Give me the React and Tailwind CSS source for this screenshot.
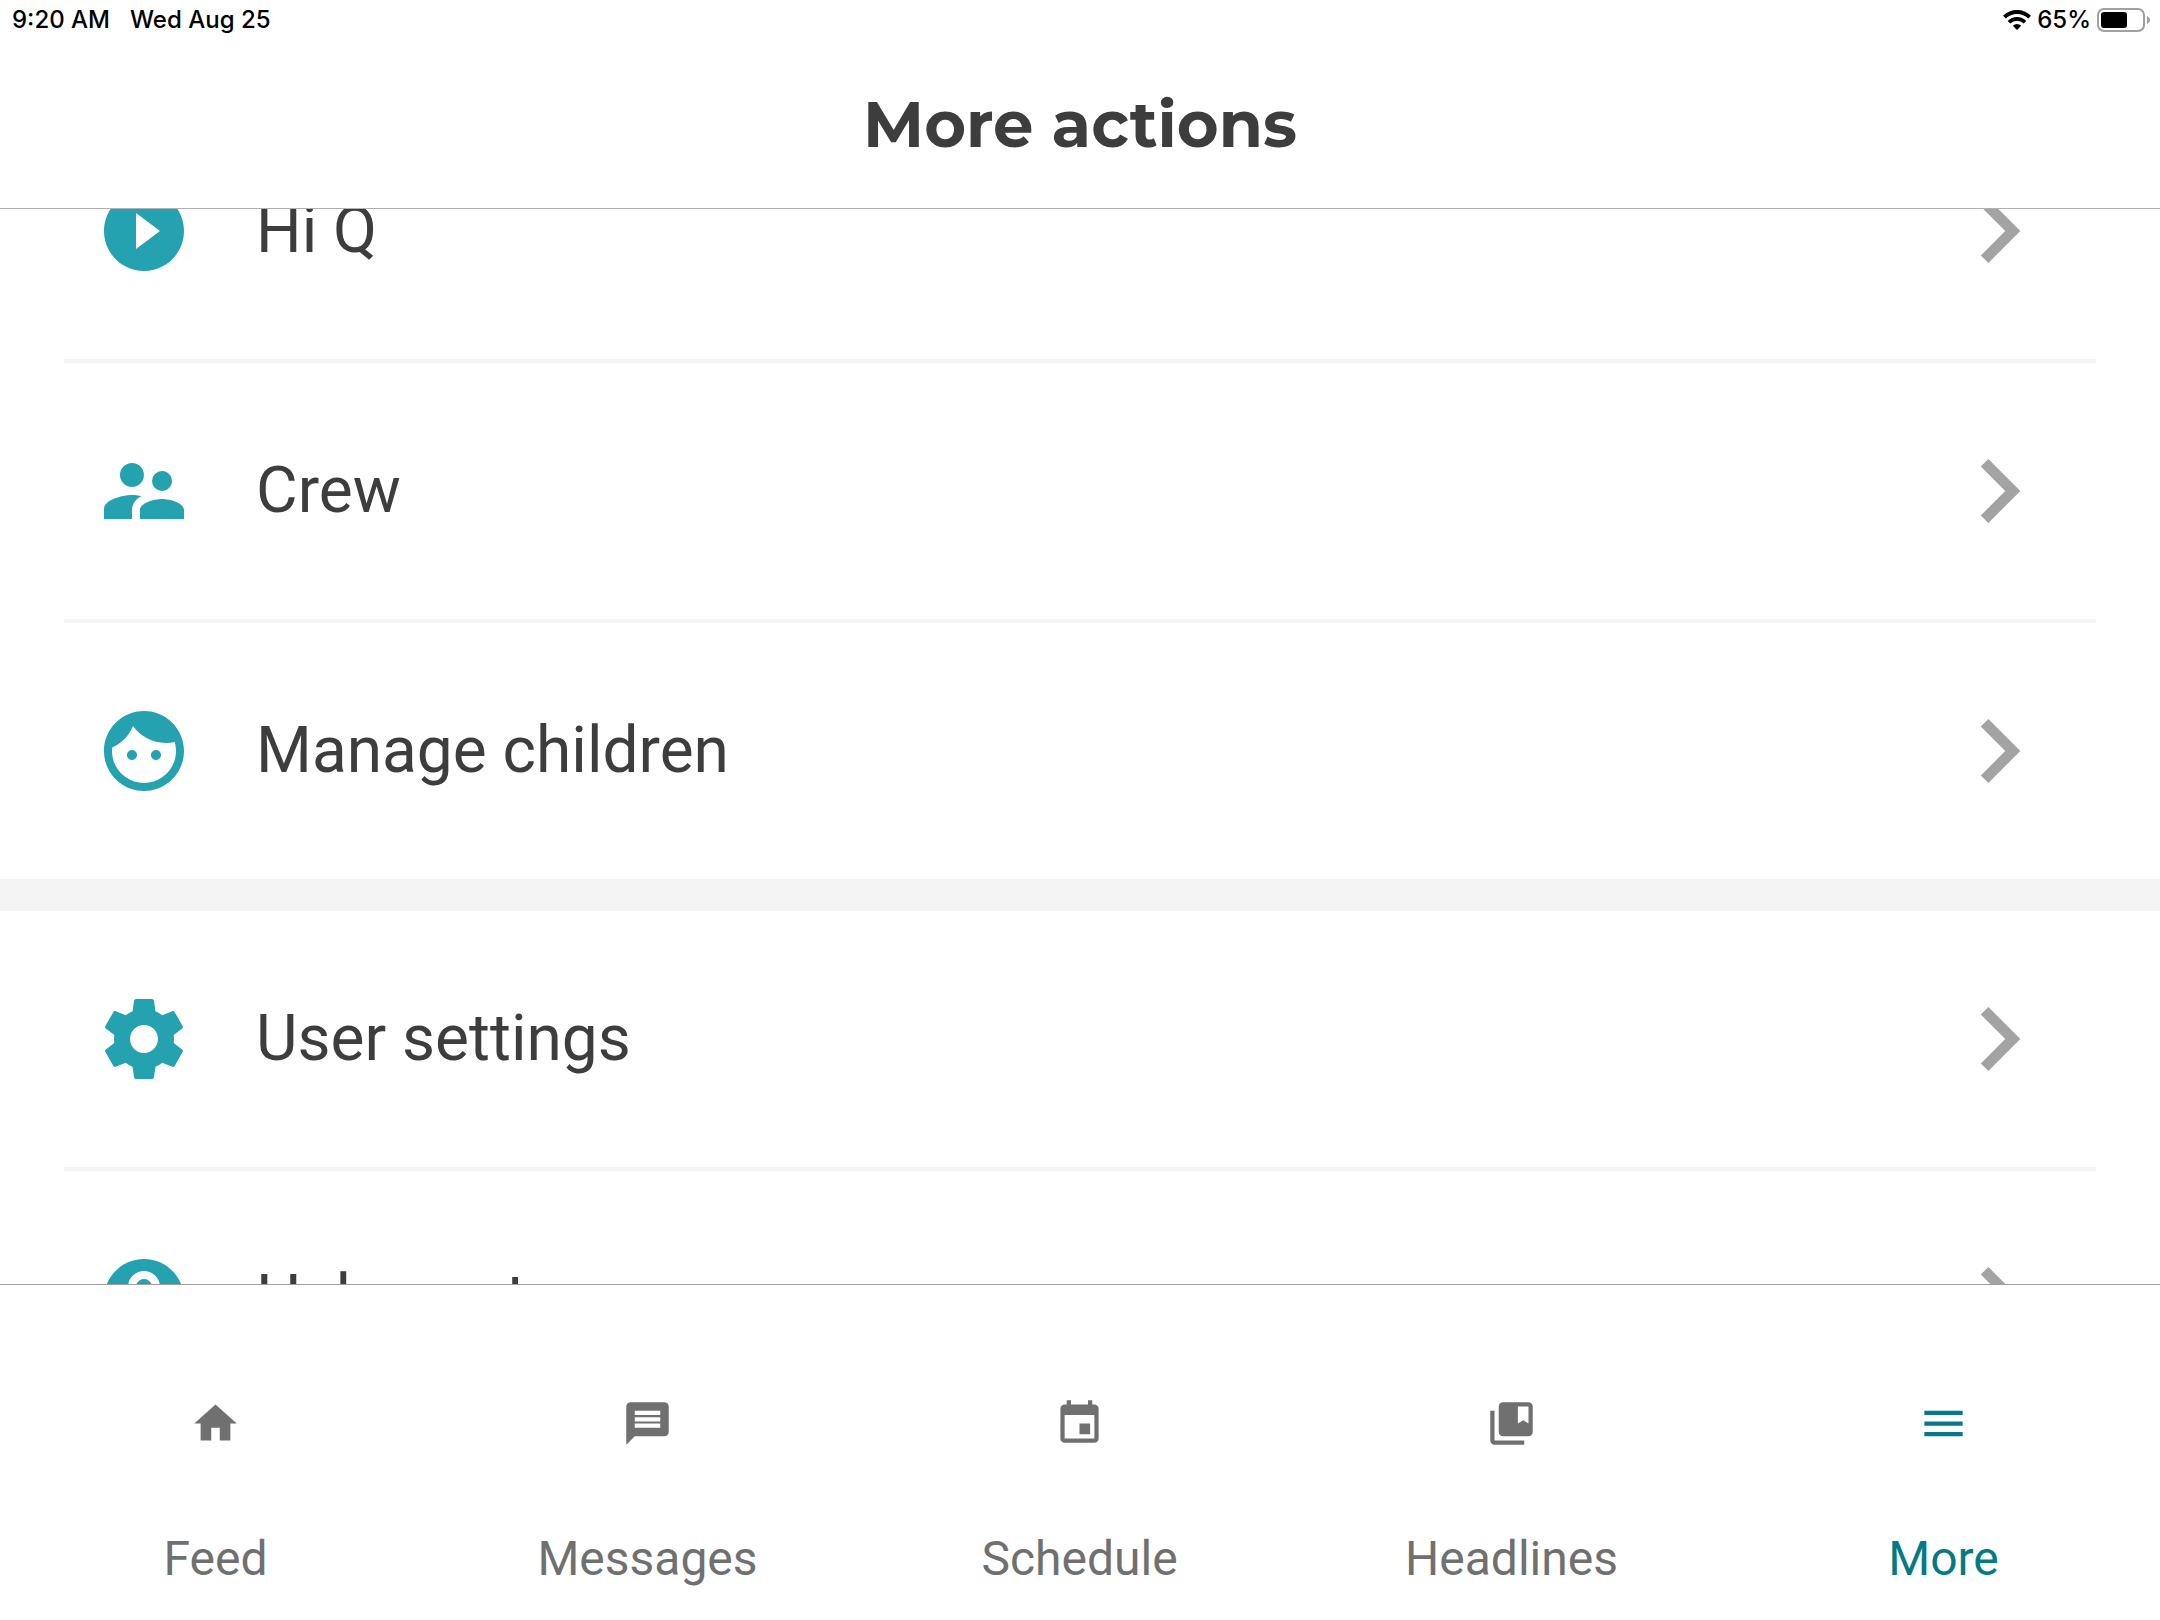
import React, { useState } from "react";
import {
  MdChevronRight,
  MdCollectionsBookmark,
  MdEvent,
  MdHelp,
  MdMenu,
  MdMessage,
  MdPlayCircleFilled,
  MdSupervisorAccount,
} from "react-icons/md";

const FaceIcon = ({ className }) => (
  <svg className={className} viewBox="0 0 24 24" fill="currentColor" aria-hidden="true">
    <path d="M9 11.75c-.69 0-1.25.56-1.25 1.25s.56 1.25 1.25 1.25 1.25-.56 1.25-1.25-.56-1.25-1.25-1.25zm6 0c-.69 0-1.25.56-1.25 1.25s.56 1.25 1.25 1.25 1.25-.56 1.25-1.25-.56-1.25-1.25-1.25zM12 2C6.48 2 2 6.48 2 12s4.48 10 10 10 10-4.48 10-10S17.52 2 12 2zm0 18c-4.41 0-8-3.59-8-8 0-.29.02-.58.05-.86 2.36-1.05 4.23-2.98 5.21-5.37C11.07 8.33 14.05 10 17.42 10c.78 0 1.53-.09 2.25-.26.21.71.33 1.47.33 2.26 0 4.41-3.59 8-8 8z" />
  </svg>
);

const GearIcon = ({ className }) => (
  <svg className={className} viewBox="0 0 24 24" fill="currentColor" aria-hidden="true">
    <path d="M19.43 12.98c.04-.32.07-.64.07-.98s-.03-.66-.07-.98l2.11-1.65c.19-.15.24-.42.12-.64l-2-3.46c-.12-.22-.39-.3-.61-.22l-2.49 1c-.52-.4-1.08-.73-1.69-.98l-.38-2.65C14.46 2.18 14.25 2 14 2h-4c-.25 0-.46.18-.49.42l-.38 2.65c-.61.25-1.17.59-1.69.98l-2.49-1c-.23-.09-.49 0-.61.22l-2 3.46c-.13.22-.07.49.12.64l2.11 1.65c-.04.32-.07.65-.07.98s.03.66.07.98l-2.11 1.65c-.19.15-.24.42-.12.64l2 3.46c.12.22.39.3.61.22l2.49-1c.52.4 1.08.73 1.69.98l.38 2.65c.03.24.24.42.49.42h4c.25 0 .46-.18.49-.42l.38-2.65c.61-.25 1.17-.59 1.69-.98l2.49 1c.23.09.49 0 .61-.22l2-3.46c.12-.22.07-.49-.12-.64l-2.11-1.65zM12 15.5c-1.93 0-3.5-1.57-3.5-3.5s1.57-3.5 3.5-3.5 3.5 1.57 3.5 3.5-1.57 3.5-3.5 3.5z" />
  </svg>
);

const HomeIcon = ({ className }) => (
  <svg className={className} viewBox="0 0 24 24" fill="currentColor" aria-hidden="true">
    <path d="M10 20v-6h4v6h5v-8h3L12 3 2 12h3v8z" />
  </svg>
);

const WifiIcon = () => (
  <svg className="w-7 h-5" viewBox="0 0 28 20" fill="none" stroke="currentColor" aria-hidden="true">
    <path d="M1.4 7.2a18 18 0 0 1 25.2 0" strokeWidth="3.9" />
    <path d="M6 12.2a11.4 11.4 0 0 1 16 0" strokeWidth="3.7" />
    <path d="M14 20l-4.2-4.2a6 6 0 0 1 8.4 0z" fill="currentColor" stroke="none" />
  </svg>
);

const BatteryIcon = () => (
  <svg className="w-[54px] h-6" viewBox="0 0 54 24" aria-hidden="true">
    <rect x="1" y="1" width="46" height="22" rx="6" fill="none" stroke="#a0a0a0" strokeWidth="2" />
    <rect x="4" y="4" width="26" height="16" rx="3" fill="#000" />
    <path d="M50 8c1.8.8 3 2.3 3 4s-1.2 3.2-3 4z" fill="#a0a0a0" />
  </svg>
);

const groups = [
  [
    { label: "Hi Q", Icon: MdPlayCircleFilled },
    { label: "Crew", Icon: MdSupervisorAccount },
    { label: "Manage children", Icon: FaceIcon },
  ],
  [
    { label: "User settings", Icon: GearIcon },
    { label: "Help center", Icon: MdHelp },
  ],
];

const tabs = [
  { label: "Feed", Icon: HomeIcon },
  { label: "Messages", Icon: MdMessage },
  { label: "Schedule", Icon: MdEvent },
  { label: "Headlines", Icon: MdCollectionsBookmark },
  { label: "More", Icon: MdMenu },
];

const StatusBar = () => (
  <div className="flex items-center justify-between h-10 pl-3 pr-[9px] text-2xl font-medium text-black font-['Inter',sans-serif]">
    <div className="flex gap-5">
      <span>9:20 AM</span>
      <span>Wed Aug 25</span>
    </div>
    <div className="flex items-center gap-1.5">
      <WifiIcon />
      <span>65%</span>
      <BatteryIcon />
    </div>
  </div>
);

const ActionRow = ({ label, Icon }) => (
  <li className="mx-16">
    <button type="button" className="flex items-center w-full h-64 pl-8 pr-[33px] text-left cursor-pointer">
      <Icon className="w-24 h-24 shrink-0 text-[#25a2af]" />
      <span className="flex-1 pl-16 text-[64px] leading-[76px]">{label}</span>
      <MdChevronRight className="w-32 h-32 shrink-0 text-[#a3a3a3]" />
    </button>
  </li>
);

const App = () => {
  const [activeTab, setActiveTab] = useState("More");

  return (
    <div className="flex flex-col h-screen bg-white text-[#3d3d3d] font-['Roboto',sans-serif]">
      <header className="border-b border-[#b0b0b0]">
        <StatusBar />
        <h1 className="py-11 text-center text-[64px] leading-[80px] font-bold font-['Montserrat','Inter',sans-serif]">
          More actions
        </h1>
      </header>

      {/* List is scrolled part of the way through its first row */}
      <main className="flex-1 min-h-0 overflow-hidden">
        <div className="-mt-[106px]">
          {groups.map((rows, i) => (
            <section key={i}>
              {i > 0 && <div className="h-8 bg-[#f4f4f4]" />}
              <ul>
                {rows.map((row, j) => (
                  <React.Fragment key={row.label}>
                    {j > 0 && <li role="separator" className="h-1 mx-16 bg-[#f4f4f4]" />}
                    <ActionRow {...row} />
                  </React.Fragment>
                ))}
              </ul>
            </section>
          ))}
        </div>
      </main>

      <nav className="grid grid-cols-5 h-[336px] shrink-0 border-t border-[#a0a0a0]">
        {tabs.map(({ label, Icon }) => (
          <a
            key={label}
            href={`#${label.toLowerCase()}`}
            onClick={() => setActiveTab(label)}
            className={`flex flex-col items-center justify-end gap-20 pr-px pb-[31px] ${
              activeTab === label ? "text-[#047a83]" : "text-[#707070]"
            }`}
          >
            <Icon className="w-[51px] h-[51px]" />
            <span className="text-5xl leading-[60px]">{label}</span>
          </a>
        ))}
      </nav>
    </div>
  );
};

export default App;
